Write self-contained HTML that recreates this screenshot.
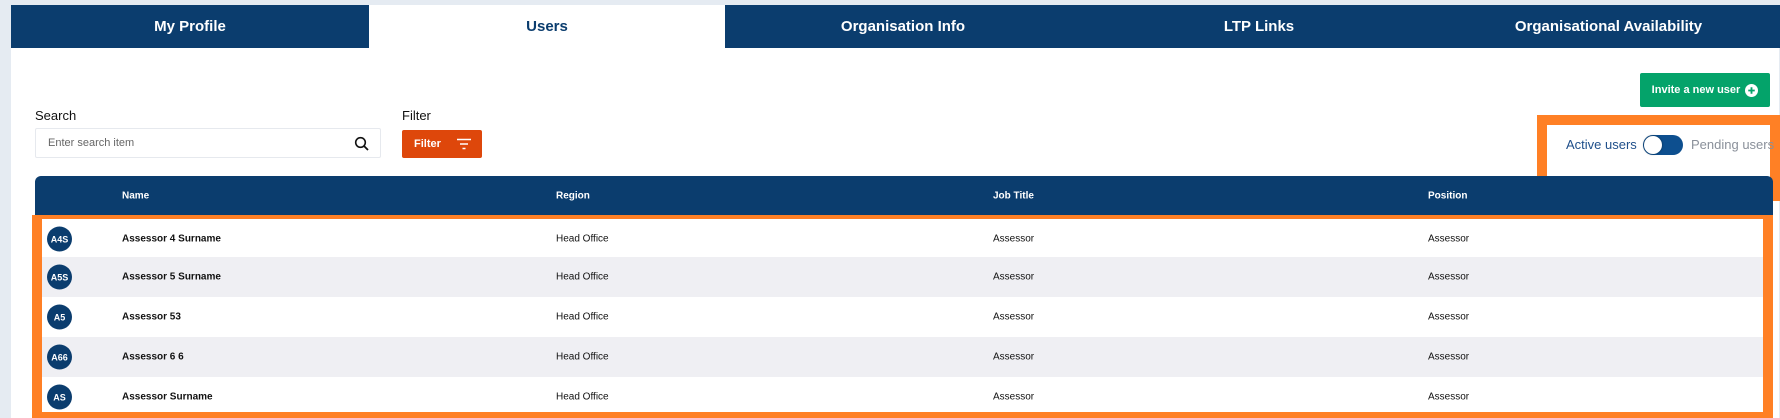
<!DOCTYPE html>
<html><head><meta charset="utf-8"><style>
*{margin:0;padding:0;box-sizing:border-box}
body{width:1780px;height:418px;background:#e5ebf2;font-family:"Liberation Sans",Arial,sans-serif;position:relative;overflow:hidden}
.a{position:absolute;white-space:nowrap}
.card{left:11px;top:48px;width:1768px;height:370px;background:#fff}
.tab{top:5px;height:43px;background:#0b3d6e;color:#fff;font-weight:bold;font-size:15px;display:flex;align-items:center;justify-content:center}
.tab.on{background:#fff;color:#0b3d6e}
.lbl{font-size:13px;color:#111}
.row{left:42px;width:1721px;height:40px}
.row span{position:absolute;top:50%;transform:translateY(-50%);font-size:10px;color:#111}
.av{position:absolute;left:5px;width:25px;height:25px;border-radius:50%;background:#0b3d6e;color:#fff;font-size:9px;font-weight:bold;display:flex;align-items:center;justify-content:center;top:50%;transform:translateY(-50%)}
.hd{position:absolute;top:50%;transform:translateY(-50%);color:#fff;font-weight:bold;font-size:10px}
</style></head><body>
<div class="a card"></div>
<div class="a tab" style="left:11px;width:358px">My Profile</div>
<div class="a tab on" style="left:369px;width:356px">Users</div>
<div class="a tab" style="left:725px;width:356px">Organisation Info</div>
<div class="a tab" style="left:1081px;width:356px">LTP Links</div>
<div class="a tab" style="left:1437px;width:343px">Organisational Availability</div>

<div class="a" style="left:1640px;top:73px;width:130px;height:34px;background:#04a36a;border-radius:2px;color:#fff;font-size:11px;font-weight:bold;display:flex;align-items:center;justify-content:center;gap:5px">Invite a new user <svg width="13" height="13" viewBox="0 0 14 14"><circle cx="7" cy="7" r="7" fill="#fff"/><path d="M7 3.5v7M3.5 7h7" stroke="#04a36a" stroke-width="2"/></svg></div>

<div class="a lbl" style="left:35px;top:108px">Search</div>
<div class="a" style="left:35px;top:128px;width:346px;height:30px;border:1px solid #e6e9ee;border-radius:2px;font-size:11px;color:#666;padding:8px 0 0 12px">Enter search item
<svg class="a" style="right:10px;top:7px" width="16" height="16" viewBox="0 0 16 16"><circle cx="6.5" cy="6.5" r="4.8" fill="none" stroke="#111" stroke-width="1.6"/><path d="M10 10l4 4" stroke="#111" stroke-width="1.8"/></svg></div>
<div class="a lbl" style="left:402px;top:108px">Filter</div>
<div class="a" style="left:402px;top:130px;width:80px;height:28px;background:#de470b;border-radius:2px;color:#fff;font-size:11px;font-weight:bold">
<span class="a" style="left:12px;top:8px">Filter</span>
<svg class="a" style="left:54px;top:8px" width="16" height="12" viewBox="0 0 16 12"><path d="M1 1.5h14M4 6h8M6.5 10.5h3" stroke="#fff" stroke-width="1.4"/></svg></div>

<div class="a" style="left:1537px;top:115px;width:243px;height:86px;border:10px solid #ff8025;background:#fff"></div>
<div class="a" style="left:1566px;top:137px;font-size:13px;color:#1f4f8a">Active users</div>
<div class="a" style="left:1643px;top:135px;width:40px;height:20px;border-radius:10px;background:#0d4f8f"></div>
<div class="a" style="left:1644px;top:136px;width:18px;height:18px;border-radius:50%;background:#fff;box-shadow:0 0 2px rgba(0,0,0,.5)"></div>
<div class="a" style="left:1691px;top:137px;font-size:13px;color:#8a909a">Pending users</div>

<div class="a" style="left:35px;top:176px;width:1738px;height:40px;background:#0b3d6e;border-radius:6px 6px 0 0">
<span class="hd" style="left:87px">Name</span><span class="hd" style="left:521px">Region</span><span class="hd" style="left:958px">Job Title</span><span class="hd" style="left:1393px">Position</span></div>

<div class="a" style="left:32px;top:215px;width:1741px;height:203px;border:10px solid #ff8025;border-bottom-width:6px;background:#fff"></div>
<div class="a row" style="top:219px;background:#fff"><div class="av">A4S</div><span style="left:80px;font-weight:bold">Assessor 4 Surname</span><span style="left:514px">Head Office</span><span style="left:951px">Assessor</span><span style="left:1386px">Assessor</span></div>
<div class="a row" style="top:257px;background:#efeff3"><div class="av">A5S</div><span style="left:80px;font-weight:bold">Assessor 5 Surname</span><span style="left:514px">Head Office</span><span style="left:951px">Assessor</span><span style="left:1386px">Assessor</span></div>
<div class="a row" style="top:297px;background:#fff"><div class="av">A5</div><span style="left:80px;font-weight:bold">Assessor 53</span><span style="left:514px">Head Office</span><span style="left:951px">Assessor</span><span style="left:1386px">Assessor</span></div>
<div class="a row" style="top:337px;background:#efeff3"><div class="av">A66</div><span style="left:80px;font-weight:bold">Assessor 6 6</span><span style="left:514px">Head Office</span><span style="left:951px">Assessor</span><span style="left:1386px">Assessor</span></div>
<div class="a row" style="top:377px;height:35px;background:#fff"><div class="av" style="top:20px">AS</div><span style="left:80px;font-weight:bold;top:20px">Assessor Surname</span><span style="left:514px;top:20px">Head Office</span><span style="left:951px;top:20px">Assessor</span><span style="left:1386px;top:20px">Assessor</span></div>
</body></html>
